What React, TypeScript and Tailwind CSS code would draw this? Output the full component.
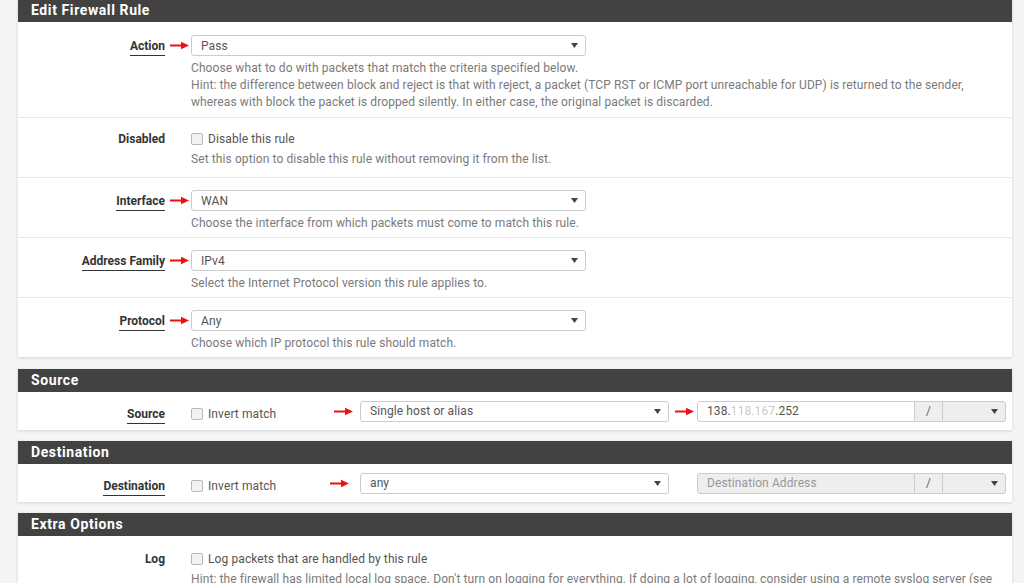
import React from 'react';

const FONT = { fontFamily: 'Roboto, "Liberation Sans", Arial, sans-serif' };

function Arrow() {
  return (
    <svg width="19" height="9" viewBox="0 0 19 9" className="block">
      <path d="M0 4.5h13" stroke="#ee1111" strokeWidth="2" />
      <path d="M11 0.8 L19 4.5 L11 8.2 Z" fill="#ee1111" />
    </svg>
  );
}

function Caret() {
  return (
    <svg width="7" height="5" viewBox="0 0 7 5" className="block">
      <path d="M0 0h7L3.5 5z" fill="#444" />
    </svg>
  );
}

function Select({ value, className = '' }: { value: string; className?: string }) {
  return (
    <div
      className={`flex h-[21px] items-center justify-between rounded-[3px] border border-[#cccccc] bg-white pl-[9px] pr-[7px] text-[12px] tracking-[0.1px] text-[#555] ${className}`}
    >
      <span>{value}</span>
      <Caret />
    </div>
  );
}

function Checkbox() {
  return <span className="inline-block h-[12px] w-[12px] shrink-0 rounded-[2px] border border-[#b8b8b8] bg-[#f2f2f2]" />;
}

function Label({ text, underline }: { text: string; underline?: boolean }) {
  return (
    <div className="w-[147px] shrink-0 text-right text-[12px] font-bold text-[#333]">
      <span className={underline ? 'border-b border-[#333] pb-[2px]' : ''}>{text}</span>
    </div>
  );
}

function Header({ title, first }: { title: string; first?: boolean }) {
  return (
    <div
      className={`flex items-center bg-[#424242] px-[13px] text-[14px] font-bold tracking-[0.6px] text-white ${
        first ? 'h-[22px] pb-[2px]' : 'h-[23px]'
      }`}
    >
      {title}
    </div>
  );
}

function Help({ lines }: { lines: string[] }) {
  return (
    <div className="ml-[173px] mt-[4px] w-[815px] text-[12px] leading-[17px] tracking-[0.1px] text-[#7a7a7a]">
      {lines.map((h) => (
        <div key={h}>{h}</div>
      ))}
    </div>
  );
}

function SelectRow({ label, value, help, first }: { label: string; value: string; help: string[]; first?: boolean }) {
  return (
    <div className={first ? 'pb-[6px] pt-[13px]' : 'border-t border-[#e6e6e6] pb-[5px] pt-[12px]'}>
      <div className="flex h-[21px] items-center">
        <Label text={label} underline />
        <div className="w-[26px] shrink-0 pl-[5px]">
          <Arrow />
        </div>
        <Select value={value} className="w-[395px]" />
      </div>
      <Help lines={help} />
    </div>
  );
}

function CheckRow({ label, text, help, border = true }: { label: string; text: string; help: string[]; border?: boolean }) {
  return (
    <div className={border ? 'border-t border-[#e6e6e6] pb-[9px] pt-[12px]' : 'pb-[9px] pt-[14px]'}>
      <div className="flex h-[17px] items-center">
        <Label text={label} />
        <div className="w-[26px] shrink-0" />
        <Checkbox />
        <span className="ml-[5px] text-[12px] tracking-[0.1px] text-[#555]">{text}</span>
      </div>
      <Help lines={help} />
    </div>
  );
}

function AddressRow({ label, value, source }: { label: string; value: string; source?: boolean }) {
  return (
    <div className="flex h-[38px] items-center">
      <div className="flex items-center pt-[5px]">
        <Label text={label} underline />
        <div className="w-[26px] shrink-0" />
        <Checkbox />
        <span className="ml-[5px] w-[118px] text-[12px] tracking-[0.1px] text-[#555]">Invert match</span>
      </div>
      <div className={`flex w-[34px] shrink-0 ${source ? 'justify-end pr-[7px]' : 'pl-[4px]'}`}>
        <Arrow />
      </div>
      <Select value={value} className="w-[309px]" />
      <div className="w-[28px] shrink-0 pl-[6px]">{source && <Arrow />}</div>
      <div className="flex h-[21px] w-[309px] text-[12px] tracking-[0.1px]">
        {source ? (
          <div className="flex w-[218px] items-center rounded-l-[3px] border border-[#cccccc] bg-white pl-[9px] text-[#555]">
            138.<span className="text-[#c9c9c9] blur-[0.7px]">118.167</span>.252
          </div>
        ) : (
          <div className="flex w-[218px] items-center rounded-l-[3px] border border-[#cccccc] bg-[#eeeeee] pl-[9px] text-[#999]">
            Destination Address
          </div>
        )}
        <div className="flex w-[27px] items-center justify-center border-y border-[#cccccc] bg-[#eeeeee] text-[#666]">/</div>
        <div className="flex flex-1 items-center justify-end rounded-r-[3px] border border-[#cccccc] bg-[#eeeeee] pr-[7px]">
          <Caret />
        </div>
      </div>
    </div>
  );
}

function Panel({ children, className = '' }: { children: React.ReactNode; className?: string }) {
  return <div className={`w-[994px] bg-white shadow-[0_1px_3px_rgba(0,0,0,0.14)] ${className}`}>{children}</div>;
}

export default function App() {
  return (
    <div className="min-h-screen bg-[#f4f4f4] pl-[18px]" style={FONT}>
      <div className="flex flex-col gap-[11px]">
        <Panel className="mb-[1px]">
          <Header title="Edit Firewall Rule" first />
          <SelectRow
            first
            label="Action"
            value="Pass"
            help={[
              'Choose what to do with packets that match the criteria specified below.',
              'Hint: the difference between block and reject is that with reject, a packet (TCP RST or ICMP port unreachable for UDP) is returned to the sender,',
              'whereas with block the packet is dropped silently. In either case, the original packet is discarded.',
            ]}
          />
          <CheckRow
            label="Disabled"
            text="Disable this rule"
            help={['Set this option to disable this rule without removing it from the list.']}
          />
          <SelectRow
            label="Interface"
            value="WAN"
            help={['Choose the interface from which packets must come to match this rule.']}
          />
          <SelectRow
            label="Address Family"
            value="IPv4"
            help={['Select the Internet Protocol version this rule applies to.']}
          />
          <SelectRow label="Protocol" value="Any" help={['Choose which IP protocol this rule should match.']} />
        </Panel>

        <Panel>
          <Header title="Source" />
          <AddressRow label="Source" value="Single host or alias" source />
        </Panel>

        <Panel>
          <Header title="Destination" />
          <AddressRow label="Destination" value="any" />
        </Panel>

        <Panel>
          <Header title="Extra Options" />
          <CheckRow
            label="Log"
            text="Log packets that are handled by this rule"
            border={false}
            help={[
              "Hint: the firewall has limited local log space. Don't turn on logging for everything. If doing a lot of logging, consider using a remote syslog server (see",
              'the Status: System Logs: Settings page).',
            ]}
          />
        </Panel>
      </div>
    </div>
  );
}
